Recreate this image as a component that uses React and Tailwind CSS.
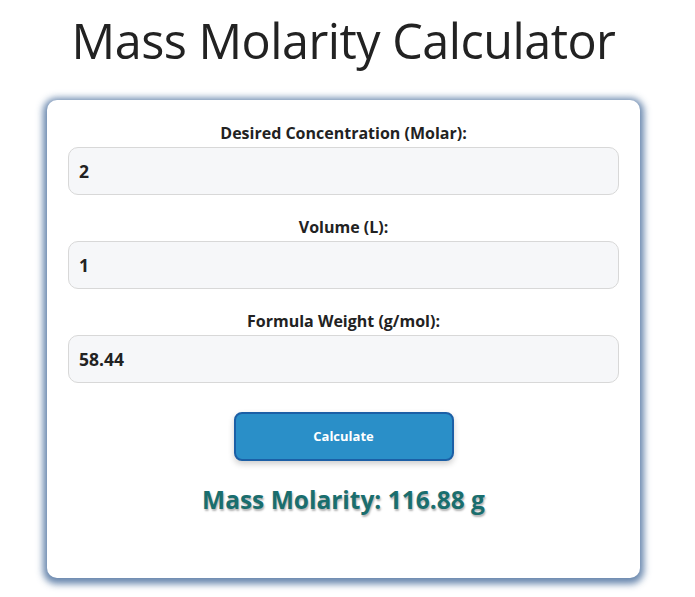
export default function App() {
  const fields = [
    { label: "Desired Concentration (Molar):", value: "2" },
    { label: "Volume (L):", value: "1" },
    { label: "Formula Weight (g/mol):", value: "58.44" },
  ];

  return (
    <div
      className="min-h-screen bg-white flex flex-col items-center pt-[9px] pr-[8px]"
      style={{ fontFamily: '"Open Sans", "Noto Sans", sans-serif' }}
    >
      <h1 className="text-[48.5px] leading-[62px] font-normal text-[#222] tracking-[-0.5px]">
        Mass Molarity Calculator
      </h1>

      <div className="mt-[29px] w-[593px] h-[478px] bg-white rounded-[10px] px-[21px] pt-[23px] shadow-[0_2px_7px_4px_rgba(80,115,160,0.85)]">
        <div className="flex flex-col gap-[22px]">
          {fields.map((f) => (
            <div key={f.label} className="flex flex-col">
              <label className="text-center text-[16px] leading-[20px] font-bold text-[#222] mb-[4px]">
                {f.label}
              </label>
              <input
                type="text"
                defaultValue={f.value}
                className="h-[48px] w-full rounded-[10px] border border-[#d8d8d8] bg-[#f6f7f9] px-[10px] text-[17.5px] font-bold text-[#222] outline-none"
              />
            </div>
          ))}
        </div>

        <div className="flex justify-center mt-[29px]">
          <button className="w-[220px] h-[49px] rounded-[8px] bg-[#2a8fc8] border-2 border-[#1b5fa6] text-white text-[13px] font-bold shadow-[0_3px_6px_rgba(0,0,0,0.2)]">
            Calculate
          </button>
        </div>

        <p className="mt-[21px] text-center text-[24.5px] font-bold text-[#1a6e6e] [text-shadow:1px_2px_2px_rgba(0,0,0,0.3)]">
          Mass Molarity: 116.88 g
        </p>
      </div>
    </div>
  );
}
